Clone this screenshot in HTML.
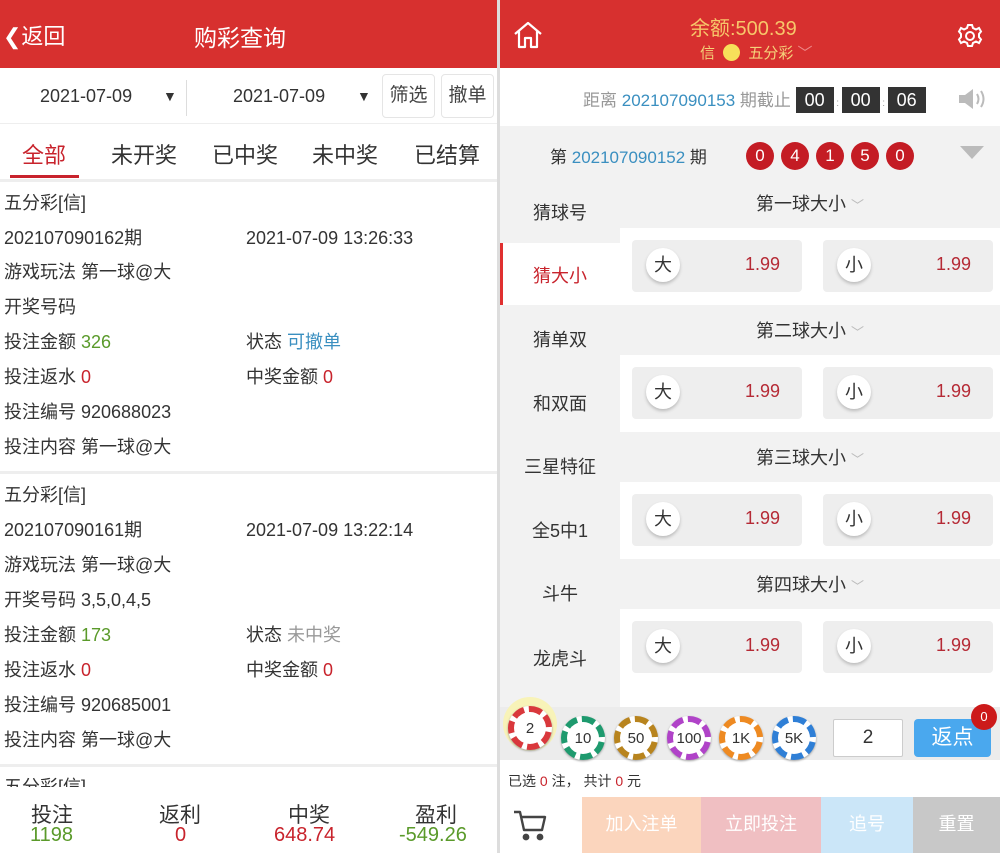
<!DOCTYPE html><html><head><meta charset="utf-8"><style>
*{margin:0;padding:0;box-sizing:border-box}
body{width:1000px;height:853px;overflow:hidden;position:relative;background:#fff;font-family:"Liberation Sans","Noto Sans CJK SC",sans-serif;color:#333}
.a{position:absolute;white-space:nowrap}
.r{color:#c8232c}.g{color:#5a9a2a}.b{color:#3a8fc0}.gr{color:#999}
.row{font-size:18px;line-height:22px}
.chip{position:absolute;top:716px;width:44px;height:44px;border-radius:50%;background:#fff;border:6px dashed;font-size:15px;display:flex;align-items:center;justify-content:center;color:#333;box-shadow:0 1px 2px #999}
.card{position:absolute;height:52px;width:170px;background:#eee;border-radius:4px}
.card .c{position:absolute;left:14px;top:8px;width:34px;height:34px;border-radius:50%;background:#fff;box-shadow:0 2px 3px #bbb;font-size:18px;text-align:center;line-height:34px}
.card .v{position:absolute;right:22px;top:14px;font-size:18px;color:#b52a35}
.sec{position:absolute;left:620px;width:380px;text-align:center;font-size:18px;color:#333}
.side{position:absolute;left:500px;width:120px;text-align:center;font-size:18px}
.ball{display:inline-block;width:28px;height:28px;border-radius:50%;background:#c41c24;color:#fff;text-align:center;line-height:28px;font-size:17px;margin-right:7px}
.t{background:#333;color:#fff;display:inline-block;width:38px;height:26px;line-height:26px;text-align:center;font-size:18px}
.cl{display:inline-block;width:8px;text-align:center;font-size:10px;color:#999}
</style></head><body>
<!-- LEFT -->
<div class="a" style="left:0;top:0;width:497px;height:68px;background:#d7302f"></div>
<div class="a" style="left:3px;top:19px;font-size:22px;color:#fff">❮返回</div>
<div class="a" style="left:194px;top:19px;font-size:23px;color:#fff">购彩查询</div>
<div class="a" style="left:40px;top:86px;font-size:18px">2021-07-09</div>
<div class="a" style="left:163px;top:88px;font-size:14px">▼</div>
<div class="a" style="left:186px;top:80px;width:1px;height:36px;background:#ddd"></div>
<div class="a" style="left:233px;top:86px;font-size:18px">2021-07-09</div>
<div class="a" style="left:357px;top:88px;font-size:14px">▼</div>
<div class="a" style="left:382px;top:74px;width:53px;height:44px;border:1px solid #e5e5e5;border-radius:4px;font-size:19px;text-align:center;line-height:42px;color:#444">筛选</div>
<div class="a" style="left:441px;top:74px;width:53px;height:44px;border:1px solid #e5e5e5;border-radius:4px;font-size:19px;text-align:center;line-height:42px;color:#444">撤单</div>
<div class="a" style="left:0;top:123px;width:497px;height:1px;background:#eee"></div>
<div class="a" style="left:22px;top:138px;font-size:22px;color:#c8232c">全部</div>
<div class="a" style="left:10px;top:175px;width:69px;height:3px;background:#c8232c"></div>
<div class="a" style="left:111px;top:138px;font-size:22px">未开奖</div>
<div class="a" style="left:212px;top:138px;font-size:22px">已中奖</div>
<div class="a" style="left:312px;top:138px;font-size:22px">未中奖</div>
<div class="a" style="left:414px;top:138px;font-size:22px">已结算</div>
<div class="a" style="left:0;top:179px;width:497px;height:3px;background:#eee"></div>
<div class="a row" style="left:4px;top:192px">五分彩[信]</div>
<div class="a row" style="left:4px;top:227px">202107090162期</div><div class="a row" style="left:246px;top:227px">2021-07-09 13:26:33</div>
<div class="a row" style="left:4px;top:261px">游戏玩法 第一球@大</div>
<div class="a row" style="left:4px;top:296px">开奖号码</div>
<div class="a row" style="left:4px;top:331px">投注金额 <span class="g">326</span></div><div class="a row" style="left:246px;top:331px">状态 <span class="b">可撤单</span></div>
<div class="a row" style="left:4px;top:366px">投注返水 <span class="r">0</span></div><div class="a row" style="left:246px;top:366px">中奖金额 <span class="r">0</span></div>
<div class="a row" style="left:4px;top:401px">投注编号 920688023</div>
<div class="a row" style="left:4px;top:436px">投注内容 第一球@大</div>
<div class="a" style="left:0;top:471px;width:497px;height:3px;background:#eee"></div>
<div class="a row" style="left:4px;top:484px">五分彩[信]</div>
<div class="a row" style="left:4px;top:519px">202107090161期</div><div class="a row" style="left:246px;top:519px">2021-07-09 13:22:14</div>
<div class="a row" style="left:4px;top:554px">游戏玩法 第一球@大</div>
<div class="a row" style="left:4px;top:589px">开奖号码 3,5,0,4,5</div>
<div class="a row" style="left:4px;top:624px">投注金额 <span class="g">173</span></div><div class="a row" style="left:246px;top:624px">状态 <span class="gr">未中奖</span></div>
<div class="a row" style="left:4px;top:659px">投注返水 <span class="r">0</span></div><div class="a row" style="left:246px;top:659px">中奖金额 <span class="r">0</span></div>
<div class="a row" style="left:4px;top:694px">投注编号 920685001</div>
<div class="a row" style="left:4px;top:729px">投注内容 第一球@大</div>
<div class="a" style="left:0;top:764px;width:497px;height:3px;background:#eee"></div>
<div class="a row" style="left:4px;top:776px;height:11px;overflow:hidden">五分彩[信]</div>
<div class="a" style="left:0;top:787px;width:497px;height:66px;background:#fff"></div>
<div class="a" style="left:31px;top:799px;font-size:21px">投注</div><div class="a g" style="left:30px;top:824px;font-size:20px">1198</div>
<div class="a" style="left:159px;top:799px;font-size:21px">返利</div><div class="a r" style="left:175px;top:824px;font-size:20px">0</div>
<div class="a" style="left:288px;top:799px;font-size:21px">中奖</div><div class="a r" style="left:274px;top:824px;font-size:20px">648.74</div>
<div class="a" style="left:415px;top:799px;font-size:21px">盈利</div><div class="a g" style="left:399px;top:824px;font-size:20px">-549.26</div>
<!-- RIGHT -->
<div class="a" style="left:497px;top:0;width:3px;height:853px;background:#ddd"></div>
<div class="a" style="left:500px;top:0;width:500px;height:68px;background:#d7302f"></div>
<svg class="a" style="left:512px;top:20px" width="32" height="30" viewBox="0 0 32 30" fill="none" stroke="#fff" stroke-width="2.2" stroke-linejoin="round"><path d="M3 14 L16 3 L29 14 M7 11 V27 H13 V18 H19 V27 H25 V11"/></svg>
<div class="a" style="left:690px;top:12px;font-size:20px;color:#f7c66a">余额:500.39</div>
<div class="a" style="left:700px;top:42px;font-size:15px;color:#f5d27a">信 <span style="display:inline-block;width:17px;height:17px;border-radius:50%;background:#f7e05a;vertical-align:-3px;margin:0 4px"></span> 五分彩 <span style="color:#e88">﹀</span></div>
<svg class="a" style="left:956px;top:22px" width="28" height="28" viewBox="0 0 28 28" fill="none" stroke="#fff" stroke-width="2"><circle cx="14" cy="14" r="4"/><path d="M12 3h4l1 3 3 1.5 3-1.5 2 3.5-2 2.5v3l2 2.5-2 3.5-3-1.5-3 1.5-1 3h-4l-1-3-3-1.5-3 1.5-2-3.5 2-2.5v-3l-2-2.5 2-3.5 3 1.5 3-1.5z"/></svg>
<div class="a" style="left:583px;top:86px;font-size:17px;color:#999">距离 <span class="b">202107090153</span> 期截止 <span class="t">00</span><span class="cl">:</span><span class="t">00</span><span class="cl">:</span><span class="t">06</span></div>
<svg class="a" style="left:957px;top:86px" width="30" height="26" viewBox="0 0 30 26"><path d="M2 9h6l8-6v20l-8-6H2z" fill="#bbb"/><path d="M20 8q3 5 0 10M24 5q5 8 0 16" stroke="#bbb" stroke-width="2" fill="none"/></svg>
<div class="a" style="left:500px;top:126px;width:500px;height:59px;background:#f2f2f2"></div>
<div class="a" style="left:550px;top:143px;font-size:17px">第 <span class="b">202107090152</span> 期</div>
<div class="a" style="left:746px;top:142px"><span class="ball">0</span><span class="ball">4</span><span class="ball">1</span><span class="ball">5</span><span class="ball">0</span></div>
<div class="a" style="left:960px;top:146px;width:0;height:0;border-left:12px solid transparent;border-right:12px solid transparent;border-top:13px solid #bbb"></div>
<div class="a" style="left:500px;top:185px;width:500px;height:522px;background:#f2f2f2"></div>
<div class="a" style="left:620px;top:228px;width:380px;height:77px;background:#fff"></div>
<div class="a" style="left:620px;top:355px;width:380px;height:77px;background:#fff"></div>
<div class="a" style="left:620px;top:482px;width:380px;height:77px;background:#fff"></div>
<div class="a" style="left:620px;top:609px;width:380px;height:77px;background:#fff"></div>
<div class="a" style="left:620px;top:686px;width:380px;height:21px;background:#fff"></div>
<div class="a" style="left:500px;top:243px;width:120px;height:62px;background:#fff;border-left:3px solid #e03030"></div>
<div class="side" style="top:199px">猜球号</div>
<div class="side r" style="top:262px">猜大小</div>
<div class="side" style="top:326px">猜单双</div>
<div class="side" style="top:390px">和双面</div>
<div class="side" style="top:453px">三星特征</div>
<div class="side" style="top:517px">全5中1</div>
<div class="side" style="top:580px">斗牛</div>
<div class="side" style="top:645px">龙虎斗</div>
<div class="sec" style="top:190px">第一球大小 <span style="color:#bbb;font-size:13px">﹀</span></div>
<div class="sec" style="top:317px">第二球大小 <span style="color:#bbb;font-size:13px">﹀</span></div>
<div class="sec" style="top:444px">第三球大小 <span style="color:#bbb;font-size:13px">﹀</span></div>
<div class="sec" style="top:571px">第四球大小 <span style="color:#bbb;font-size:13px">﹀</span></div>
<div class="card" style="left:632px;top:240px"><div class="c">大</div><div class="v">1.99</div></div>
<div class="card" style="left:823px;top:240px"><div class="c">小</div><div class="v">1.99</div></div>
<div class="card" style="left:632px;top:367px"><div class="c">大</div><div class="v">1.99</div></div>
<div class="card" style="left:823px;top:367px"><div class="c">小</div><div class="v">1.99</div></div>
<div class="card" style="left:632px;top:494px"><div class="c">大</div><div class="v">1.99</div></div>
<div class="card" style="left:823px;top:494px"><div class="c">小</div><div class="v">1.99</div></div>
<div class="card" style="left:632px;top:621px"><div class="c">大</div><div class="v">1.99</div></div>
<div class="card" style="left:823px;top:621px"><div class="c">小</div><div class="v">1.99</div></div>
<div class="a" style="left:500px;top:707px;width:500px;height:53px;background:#ececec"></div>
<div class="a" style="left:503px;top:697px;width:54px;height:54px;border-radius:50%;background:#f8f3b8"></div>
<div class="chip" style="left:508px;top:706px;border-color:#d9383c">2</div>
<div class="chip" style="left:561px;border-color:#1e9a6e">10</div>
<div class="chip" style="left:614px;border-color:#b8841e">50</div>
<div class="chip" style="left:667px;border-color:#b043c8">100</div>
<div class="chip" style="left:719px;border-color:#ee8a22">1K</div>
<div class="chip" style="left:772px;border-color:#2f7fd6">5K</div>
<div class="a" style="left:833px;top:719px;width:70px;height:38px;background:#fff;border:1px solid #ccc;border-radius:2px;text-align:center;line-height:36px;font-size:19px">2</div>
<div class="a" style="left:914px;top:719px;width:77px;height:38px;background:#4aa8ee;border-radius:4px;color:#fff;font-size:21px;text-align:center;line-height:38px">返点</div>
<div class="a" style="left:971px;top:704px;width:26px;height:26px;border-radius:50%;background:#cc1a1a;color:#fff;font-size:13px;text-align:center;line-height:26px">0</div>
<div class="a" style="left:508px;top:771px;font-size:14px">已选 <span class="r">0</span> 注， 共计 <span class="r">0</span> 元</div>
<div class="a" style="left:500px;top:797px;width:500px;height:56px;background:#fff"></div>
<svg class="a" style="left:512px;top:808px" width="36" height="34" viewBox="0 0 36 34" fill="none" stroke="#444" stroke-width="2.4" stroke-linejoin="round"><path d="M2 4h6l4 18h18l3-13H10"/><circle cx="14" cy="29" r="2.2" fill="#444"/><circle cx="28" cy="29" r="2.2" fill="#444"/></svg>
<div class="a" style="left:582px;top:797px;width:119px;height:56px;background:#fbd5bd;color:#fff;font-size:18px;text-align:center;line-height:54px">加入注单</div>
<div class="a" style="left:701px;top:797px;width:120px;height:56px;background:#f0bfc2;color:#fff;font-size:18px;text-align:center;line-height:54px">立即投注</div>
<div class="a" style="left:821px;top:797px;width:92px;height:56px;background:#cbe6f8;color:#fff;font-size:18px;text-align:center;line-height:54px">追号</div>
<div class="a" style="left:913px;top:797px;width:87px;height:56px;background:#c8c8c8;color:#fff;font-size:18px;text-align:center;line-height:54px">重置</div>
</body></html>
